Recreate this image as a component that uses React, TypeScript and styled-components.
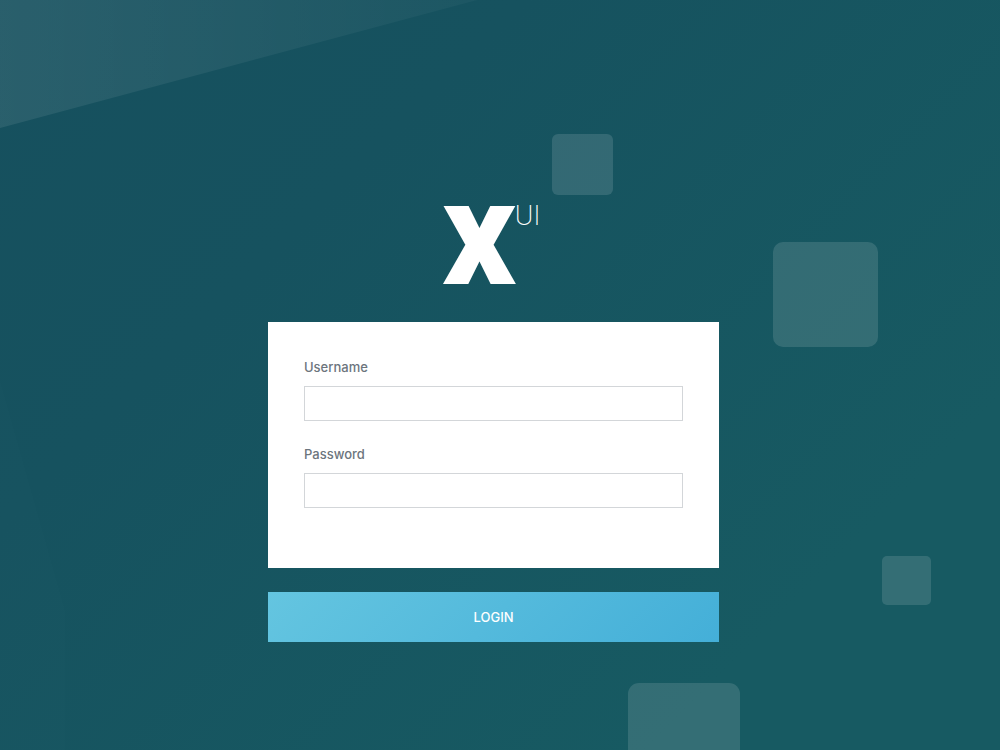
import React from "react";
import styled, { createGlobalStyle } from "styled-components";

const GlobalStyle = createGlobalStyle`
  *, *::before, *::after { box-sizing: border-box; }
  body {
    margin: 0;
    background: #17545f;
    font-family: Inter, "Open Sans", "Liberation Sans", sans-serif;
  }
`;

const Page = styled.main`
  position: relative;
  display: flex;
  flex-direction: column;
  align-items: center;
  min-height: 100vh;
  padding: 206px 13px 24px 0;
  overflow: hidden;
  background: linear-gradient(135deg, #16505e 0%, #16525f 30%, #175a62 80%, #175a62 100%);
`;

const Backdrop = styled.svg`
  position: absolute;
  top: 0;
  left: 0;
`;

const Square = styled.span<{ $x: string; $y: number; $size: number; $radius: number }>`
  position: absolute;
  left: ${(p) => p.$x};
  top: ${(p) => p.$y}px;
  width: ${(p) => p.$size}px;
  height: ${(p) => p.$size}px;
  border-radius: ${(p) => p.$radius}px;
  background: rgba(255, 255, 255, 0.125);
`;

const Content = styled.div`
  position: relative;
  display: flex;
  flex-direction: column;
  width: 100%;
  max-width: 451px;
`;

const Logo = styled.h1`
  display: flex;
  justify-content: center;
  align-items: flex-start;
  gap: 2px;
  margin: 0 0 34px;
  color: #fff;
  font-family: Roboto, "Liberation Sans", sans-serif;
`;

const LogoMark = styled.span`
  font-size: 104px;
  font-weight: 900;
  line-height: 82px;
  -webkit-text-stroke: 4px #fff;
`;

const LogoSuffix = styled.span`
  font-size: 28px;
  font-weight: 200;
  line-height: 20px;
`;

const Form = styled.form`
  display: flex;
  flex-direction: column;
  gap: 24px;
`;

const Card = styled.div`
  display: flex;
  flex-direction: column;
  gap: 24px;
  padding: 36px 36px 60px;
  background: #fff;
`;

const Field = styled.div`
  display: flex;
  flex-direction: column;
  gap: 10px;
`;

const Label = styled.label`
  color: #6c757d;
  font-size: 13px;
  font-weight: 500;
  line-height: 18px;
`;

const Input = styled.input`
  height: 35px;
  padding: 6px 12px;
  border: 1px solid #d3d6d9;
  border-radius: 0;
  background: #fff;
  color: #6c757d;
  font: inherit;
  font-size: 13px;
`;

const LoginButton = styled.button`
  height: 50px;
  border: 0;
  background: linear-gradient(135deg, #64c5e0 0%, #44afd8 100%);
  color: #fff;
  font: inherit;
  font-size: 13px;
  font-weight: 500;
  cursor: pointer;
`;

export default function App() {
  return (
    <>
      <GlobalStyle />
      <Page>
        <Backdrop width="480" height="750" viewBox="0 0 480 750" aria-hidden="true">
          <defs>
            <linearGradient id="ray" x1="0" x2="1" y1="0" y2="0">
              <stop offset="0" stopColor="#fff" stopOpacity="0.085" />
              <stop offset="1" stopColor="#fff" stopOpacity="0.03" />
            </linearGradient>
          </defs>
          <path d="M0 0H477L0 128Z" fill="url(#ray)" />
          <path d="M0 380L65 610V750H0Z" fill="#fff" fillOpacity="0.008" />
        </Backdrop>
        <Square $x="55.2%" $y={134} $size={61} $radius={6} />
        <Square $x="77.3%" $y={242} $size={105} $radius={10} />
        <Square $x="88.2%" $y={556} $size={49} $radius={5} />
        <Square $x="62.8%" $y={683} $size={112} $radius={11} />
        <Content>
          <Logo>
            <LogoMark>X</LogoMark>
            <LogoSuffix>UI</LogoSuffix>
          </Logo>
          <Form onSubmit={(e) => e.preventDefault()}>
            <Card>
              <Field>
                <Label htmlFor="username">Username</Label>
                <Input id="username" name="username" type="text" autoComplete="username" />
              </Field>
              <Field>
                <Label htmlFor="password">Password</Label>
                <Input id="password" name="password" type="password" autoComplete="current-password" />
              </Field>
            </Card>
            <LoginButton type="submit">LOGIN</LoginButton>
          </Form>
        </Content>
      </Page>
    </>
  );
}
